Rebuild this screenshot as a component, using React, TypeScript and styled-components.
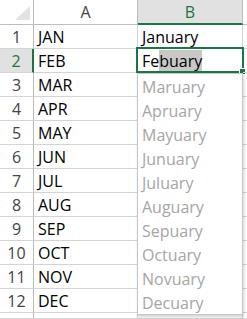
import React from "react";
import styled, {createGlobalStyle, css} from "styled-components";

const GREEN = "#217346";
const GRID = "#d4d4d4";
const HEAD_LINE = "#bdbdbd";

const months = ["JAN", "FEB", "MAR", "APR", "MAY", "JUN", "JUL", "AUG", "SEP", "OCT", "NOV", "DEC"];
const suggestions = ["Maruary", "Apruary", "Mayuary", "Junuary", "Juluary", "Auguary", "Sepuary", "Octuary", "Novuary", "Decuary"];

const GlobalStyle = createGlobalStyle`
  html, body {
    margin: 0;
    padding: 0;
    background: #fff;
    overflow: hidden;
  }
  body {
    font-family: "Open Sans", "Liberation Sans", sans-serif;
  }
`;

const App: React.FC = () => {
    return (
        <>
            <GlobalStyle/>
            <Sheet>
                <Corner>
                    <Triangle/>
                </Corner>
                <ColHeader>A</ColHeader>
                <ColHeader active>B</ColHeader>
                <ColHeader last/>

                {months.map((m, i) => {
                    const row = i + 1;
                    return (
                        <React.Fragment key={m}>
                            <RowHeader active={row === 2}>{row}</RowHeader>
                            <Cell>{m}</Cell>
                            {row === 1 && <Cell>January</Cell>}
                            {row === 2 && (
                                <Cell>
                                    <Typed>Fe</Typed><Selected>buary</Selected>
                                    <ActiveBorder>
                                        <FillHandle/>
                                    </ActiveBorder>
                                    <Dropdown>
                                        {suggestions.map(s => (
                                            <Suggestion key={s}>{s}</Suggestion>
                                        ))}
                                    </Dropdown>
                                </Cell>
                            )}
                            {row > 2 && <Cell/>}
                            <Cell last/>
                        </React.Fragment>
                    )
                })}
                <RowHeader/>
                <Cell/>
                <Cell/>
                <Cell last/>
            </Sheet>
        </>
    )
}

const Sheet = styled.div`
  display: grid;
  grid-template-columns: 34px 104px 105px 1fr;
  grid-template-rows: 25px repeat(12, 24px) 6px;
  width: 247px;
  height: 319px;
  font-size: 16px;
  line-height: 20px;
  color: #000;
`;

const Corner = styled.div`
  box-sizing: border-box;
  border-right: 1px solid ${HEAD_LINE};
  border-bottom: 1px solid ${HEAD_LINE};
  display: flex;
  justify-content: flex-end;
  align-items: flex-end;
  padding: 0 3px 4px 0;
`;

const Triangle = styled.div`
  width: 0;
  height: 0;
  border-left: 15px solid transparent;
  border-bottom: 14px solid #e3e3e3;
`;

const ColHeader = styled.div<{ active?: boolean; last?: boolean }>`
  box-sizing: border-box;
  display: flex;
  align-items: flex-end;
  justify-content: center;
  padding-bottom: 2px;
  background: #fff;
  color: #444;
  border-right: 1px solid ${HEAD_LINE};
  border-bottom: 1px solid ${HEAD_LINE};
  ${p => p.active && css`
    background: #e1e1e1;
    color: ${GREEN};
    border-bottom: 2px solid ${GREEN};
    padding-bottom: 1px;
  `}
  ${p => p.last && css`
    border-right: none;
  `}
`;

const RowHeader = styled.div<{ active?: boolean }>`
  box-sizing: border-box;
  display: flex;
  align-items: flex-end;
  justify-content: center;
  padding-bottom: 1px;
  color: #444;
  overflow: hidden;
  border-right: 1px solid ${HEAD_LINE};
  border-bottom: 1px solid ${GRID};
  ${p => p.active && css`
    background: #e1e1e1;
    color: ${GREEN};
    border-right: 2px solid ${GREEN};
  `}
`;

const Cell = styled.div<{ last?: boolean }>`
  box-sizing: border-box;
  position: relative;
  display: flex;
  align-items: flex-end;
  padding: 0 0 1px 4px;
  white-space: nowrap;
  border-right: 1px solid ${GRID};
  border-bottom: 1px solid ${GRID};
  ${p => p.last && css`
    border-right: none;
  `}
`;

const Typed = styled.span`
  display: block;
`;

const Selected = styled.span`
  align-self: stretch;
  display: flex;
  align-items: flex-end;
  background: #c8c8c8;
  margin: 1px 0 -1px;
  padding-bottom: 1px;
`;

const ActiveBorder = styled.div`
  position: absolute;
  left: -2px;
  top: -2px;
  right: -2px;
  bottom: -1px;
  border: 2px solid ${GREEN};
  pointer-events: none;
`;

const FillHandle = styled.div`
  position: absolute;
  right: -4px;
  bottom: -4px;
  width: 5px;
  height: 5px;
  background: ${GREEN};
  border: 1px solid #fff;
`;

const Dropdown = styled.div`
  position: absolute;
  left: -1px;
  top: 100%;
  margin-top: 1px;
  width: 104px;
  background: #fff;
  border: 1px solid #c6c6c6;
  box-shadow: 1px 2px 3px rgba(0, 0, 0, 0.18);
  z-index: 2;
`;

const Suggestion = styled.div`
  box-sizing: border-box;
  height: 24px;
  display: flex;
  align-items: flex-end;
  padding: 0 0 1px 4px;
  color: #a6a6a6;
`;

export default App
